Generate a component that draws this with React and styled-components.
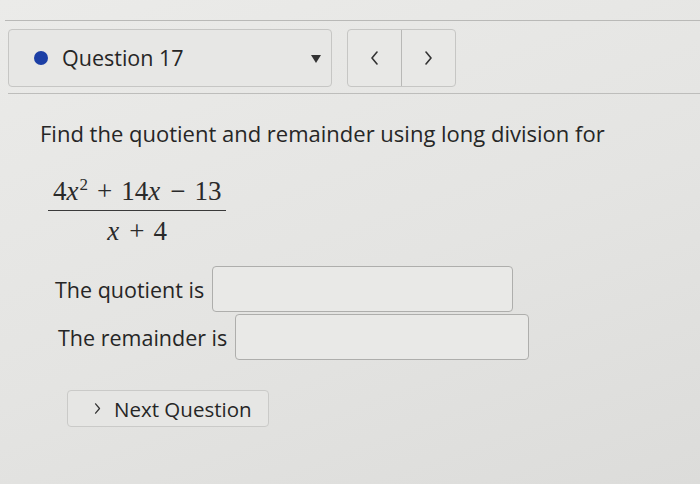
import styled, { createGlobalStyle } from 'styled-components';

const Global = createGlobalStyle`
	html, body {
		margin: 0;
		padding: 0;
	}
	body {
		width: 700px;
		height: 484px;
		overflow: hidden;
		background: linear-gradient(160deg, #ebebe9 0%, #e4e4e2 55%, #dcdcda 100%);
		font-family: "Open Sans", "Noto Sans", sans-serif;
		color: #222;
	}
`

const TopStrip = styled.div`
	height: 20px;
	margin-left: 5px;
	border-bottom: 1px solid #b9b9b7;
`

const Header = styled.div`
	display: flex;
	align-items: flex-start;
	gap: 15px;
	padding-top: 8px;
	height: 64px;
	margin-left: 8px;
	border-bottom: 1px solid #bdbdbb;
`

const Select = styled.div`
	display: flex;
	align-items: center;
	width: 324px;
	height: 58px;
	border: 1px solid #c6c6c4;
	border-radius: 4px;
	box-sizing: border-box;
	padding: 0 10px 2px 25px;
	background: #e7e7e5;
	font-size: 21.5px;
	color: #262626;
`

const Dot = styled.span`
	width: 14px;
	height: 14px;
	border-radius: 50%;
	background: #1c3fa5;
	margin: 2px 14px 0 0;
`

const Caret = styled.span`
	margin: 4px 0 0 auto;
	width: 0;
	height: 0;
	border-left: 5px solid transparent;
	border-right: 5px solid transparent;
	border-top: 8px solid #333;
`

const Nav = styled.div`
	display: flex;
	height: 58px;
	border: 1px solid #c6c6c4;
	border-radius: 4px;
	box-sizing: border-box;
	background: #e8e8e6;
`

const NavButton = styled.div`
	width: 53px;
	display: flex;
	align-items: center;
	justify-content: center;
	color: #333;
	& + & {
		border-left: 1px solid #b8b8b6;
	}
`

const Content = styled.div`
	padding: 24px 0 0 40px;
`

const Prompt = styled.p`
	margin: 0;
	font-size: 22px;
	line-height: 30px;
	color: #262626;
`

const Fraction = styled.div`
	display: inline-flex;
	flex-direction: column;
	align-items: center;
	margin: 28px 0 0 8px;
	font-family: "Liberation Serif", "Times New Roman", serif;
	font-size: 27px;
	line-height: 30px;
	color: #2a2a2a;
`

const Num = styled.div`
	padding: 0 5px 4px;
	border-bottom: 1.5px solid #3a3a3a;
`

const Den = styled.div`
	padding-top: 5px;
`

const V = styled.i`
	font-style: italic;
	margin-right: 1px;
`

const Op = styled.span`
	margin: 0 9px;
`

const Sup = styled.sup`
	font-size: 17px;
	line-height: 0;
`

const Fields = styled.div`
	display: flex;
	flex-direction: column;
	gap: 2px;
	margin: 20px 0 0 15px;
`

const Row = styled.label`
	display: flex;
	align-items: center;
	gap: 8px;
	font-size: 21.5px;
	color: #262626;
	padding-left: ${p => p.$shift || 0}px;
`

const Input = styled.div`
	width: ${p => p.$w}px;
	height: 46px;
	box-sizing: border-box;
	border: 1px solid #aeaeac;
	border-radius: 4px;
	background: #e9e9e7;
`

const NextButton = styled.div`
	display: inline-flex;
	align-items: center;
	gap: 13px;
	margin: 30px 0 0 27px;
	height: 35px;
	padding: 0 16px 0 26px;
	border: 1px solid #cacac8;
	border-radius: 4px;
	background: #e6e6e4;
	font-size: 20.5px;
	color: #262626;
`

function Chevron({ dir, size = 14 }) {
	const d = dir === 'left' ? 'M7 1 L2 7 L7 13' : 'M2 1 L7 7 L2 13'
	return (
		<svg width={size * 9 / 14} height={size} viewBox="0 0 9 14" fill="none">
			<path d={d} stroke="#333" strokeWidth="1.6" strokeLinecap="round" strokeLinejoin="round" />
		</svg>
	)
}

export default function App() {
	return (
		<>
			<Global />
			<TopStrip />
			<Header>
				<Select>
					<Dot />
					Question 17
					<Caret />
				</Select>
				<Nav>
					<NavButton><Chevron dir="left" /></NavButton>
					<NavButton><Chevron dir="right" /></NavButton>
				</Nav>
			</Header>
			<Content>
				<Prompt>Find the quotient and remainder using long division for</Prompt>
				<Fraction>
					<Num>4<V>x</V><Sup>2</Sup><Op>+</Op>14<V>x</V><Op>−</Op>13</Num>
					<Den><V>x</V><Op>+</Op>4</Den>
				</Fraction>
				<Fields>
					<Row>The quotient is <Input $w={301} /></Row>
					<Row $shift={3}>The remainder is <Input $w={294} /></Row>
				</Fields>
				<NextButton>
					<Chevron dir="right" size={11} />
					Next Question
				</NextButton>
			</Content>
		</>
	)
}
